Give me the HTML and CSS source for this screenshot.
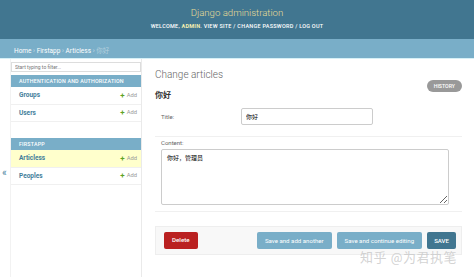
FILE: index.html
```html
<!DOCTYPE html>
<html lang="en">
<head>
    <meta charset="UTF-8">
    <title>你好 | Change articles | Django site admin</title>
    <link rel="stylesheet" href="styles.css">
</head>
<body>
    <!-- Header -->
    <header class="header">
        <div class="branding">Django administration</div>
        <div class="user-tools">
            Welcome, <strong>admin</strong>. <a href="#">View site</a> / <a href="#">Change password</a> / <a href="#">Log out</a>
        </div>
    </header>

    <nav class="breadcrumbs">
        <a href="#">Home</a> › <a href="#">Firstapp</a> › <a href="#">Articless</a> › <span class="current">你好</span>
    </nav>

    <div class="main">
        <!-- Sidebar -->
        <aside class="sidebar">
            <input class="nav-filter" type="text" placeholder="Start typing to filter...">
            <div class="module">
                <div class="caption">Authentication and Authorization</div>
                <div class="model-row"><a href="#">Groups</a><span class="addlink">Add</span></div>
                <div class="model-row"><a href="#">Users</a><span class="addlink">Add</span></div>
            </div>
            <div class="module">
                <div class="caption">Firstapp</div>
                <div class="model-row selected"><a href="#">Articless</a><span class="addlink">Add</span></div>
                <div class="model-row"><a href="#">Peoples</a><span class="addlink">Add</span></div>
            </div>
            <button class="toggle-nav">«</button>
        </aside>

        <!-- Content -->
        <main class="content">
            <h1>Change articles</h1>
            <div class="object-head">
                <h2>你好</h2>
                <a class="historylink" href="#">History</a>
            </div>
            <div class="form-row">
                <label>Title:</label>
                <input class="vTextField" type="text" value="你好">
            </div>
            <div class="form-row stacked">
                <label>Content:</label>
                <textarea class="vLargeTextField">你好，管理员</textarea>
            </div>
            <div class="submit-row">
                <a class="deletelink" href="#">Delete</a>
                <span class="spacer"></span>
                <button class="btn">Save and add another</button>
                <button class="btn">Save and continue editing</button>
                <button class="btn default">SAVE</button>
            </div>
        </main>
    </div>

    <div class="watermark">知乎 @为君执笔</div>
</body>
</html>
```

FILE: styles.css
```css
:root {
    --primary: #79aec8;
    --secondary: #417690;
    --accent: #f5dd5d;
    --link: #447e9b;
    --border: #e8e8e8;
    --body-quiet: #666;
}

* {
    margin: 0;
    padding: 0;
    box-sizing: border-box;
    font-family: Roboto, "Noto Sans CJK SC", sans-serif;
}

body {
    background: #fff;
    color: #333;
    position: relative;
    height: 277px;
    overflow: hidden;
}

a {
    text-decoration: none;
}

/* Header */
.header {
    background: var(--secondary);
    height: 39px;
    padding-top: 7px;
    text-align: center;
}

.branding {
    color: #e6dc96;
    font-size: 9.6px;
    font-weight: 300;
    line-height: 12px;
}

.user-tools {
    color: #fff;
    font-size: 5.5px;
    font-weight: 500;
    text-transform: uppercase;
    letter-spacing: 0.25px;
    margin-top: 4px;
}

.user-tools strong {
    color: #f5f0b0;
    font-weight: 700;
}

.user-tools a {
    color: #fff;
}

.breadcrumbs {
    background: var(--primary);
    height: 20px;
    padding: 6px 14px 0;
    font-size: 6.5px;
    color: #c4dce8;
    border-bottom: 1px solid #d6f0f7;
}

.breadcrumbs a {
    color: #fff;
}

.breadcrumbs .current {
    color: #b4d0de;
}

/* Layout */
.main {
    display: flex;
    height: 219px;
}

/* Sidebar */
.sidebar {
    position: relative;
    margin-left: 10px;
    width: 132px;
    border-left: 1px solid #f2f2f2;
    border-right: 1px solid #eaeaea;
    padding-top: 3px;
}

.nav-filter {
    display: block;
    width: 130px;
    height: 10px;
    border: 1px solid #ddd;
    font-size: 5px;
    padding: 0 3px;
    color: #333;
}

.nav-filter::placeholder {
    color: #777;
}

.module {
    margin-top: 3px;
    margin-bottom: 16px;
}

.caption {
    background: var(--primary);
    color: #fff;
    font-size: 5.3px;
    font-weight: 500;
    text-transform: uppercase;
    letter-spacing: 0.2px;
    height: 12px;
    line-height: 12px;
    padding-left: 8px;
}

.model-row {
    display: flex;
    justify-content: space-between;
    align-items: center;
    height: 17.5px;
    padding: 0 4px 0 8px;
    border-bottom: 1px solid #f0f0f0;
    font-size: 6.5px;
}

.model-row a {
    color: var(--link);
    font-weight: 700;
}

.model-row.selected {
    background: #ffffcc;
}

.addlink {
    color: #999;
    font-size: 5.8px;
}

.addlink::before {
    content: "+";
    color: #5fa225;
    font-weight: 700;
    font-size: 8px;
    margin-right: 2px;
    vertical-align: -1px;
}

.toggle-nav {
    position: absolute;
    left: -9px;
    top: 108px;
    background: none;
    border: none;
    color: #447e9b;
    font-size: 10px;
}

/* Content */
.content {
    width: 307px;
    margin-left: 13px;
    padding-top: 10px;
}

h1 {
    font-size: 10px;
    font-weight: 300;
    color: var(--body-quiet);
    line-height: 12px;
}

.object-head {
    display: flex;
    justify-content: space-between;
    align-items: flex-start;
    margin-top: -3px;
    height: 26px;
}

h2 {
    font-size: 8px;
    font-weight: 700;
    color: #333;
    margin-top: 11px;
}

.historylink {
    background: #999;
    color: #fff;
    font-size: 5.2px;
    font-weight: 500;
    text-transform: uppercase;
    border-radius: 7px;
    padding: 3px 7px;
    line-height: 6px;
    margin-top: 2px;
}

.form-row {
    display: flex;
    align-items: center;
    padding: 4px 6px 11px;
    border-bottom: 1px solid #f0f0f0;
    font-size: 6px;
}

.form-row label {
    color: var(--body-quiet);
    width: 80px;
}

.vTextField {
    width: 132px;
    height: 17px;
    border: 1px solid #ccc;
    border-radius: 2px;
    font-size: 6px;
    padding: 0 4px;
}

.form-row.stacked {
    display: block;
    padding: 2px 6px 6px;
}

.form-row.stacked label {
    display: block;
    margin: 0 0 3px;
}

.vLargeTextField {
    display: block;
    width: 288px;
    height: 56px;
    border: 1px solid #ccc;
    border-radius: 2px;
    font-size: 6px;
    padding: 3px 5px;
    resize: vertical;
}

.submit-row {
    display: flex;
    align-items: center;
    gap: 4px;
    margin-top: 14px;
    height: 29px;
    padding: 0 5px 0 8px;
    background: #f8f8f8;
    border: 1px solid #eee;
}

.spacer {
    flex: 1;
}

.deletelink {
    background: #ba2121;
    color: #fff;
    font-size: 6.2px;
    font-weight: 500;
    height: 17px;
    line-height: 17px;
    padding: 0 8px;
    border-radius: 2px;
}

.btn {
    background: var(--primary);
    color: #fff;
    border: none;
    border-radius: 2px;
    font-size: 6.1px;
    height: 17px;
    padding: 0 8px;
}

.btn + .btn {
    margin-left: 1px;
}

.btn.default {
    background: var(--secondary);
    font-weight: 500;
    padding: 0 7px;
}

.watermark {
    position: absolute;
    left: 360px;
    top: 247px;
    font-size: 13px;
    color: rgba(200, 200, 200, 0.8);
    letter-spacing: 0.5px;
}
```
